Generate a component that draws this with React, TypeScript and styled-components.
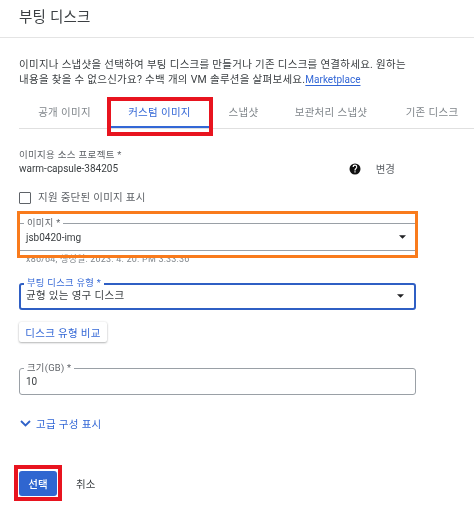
import React from "react";
import styled, { createGlobalStyle } from "styled-components";

const GlobalStyle = createGlobalStyle`
  html, body {
    margin: 0;
    padding: 0;
    background: #fff;
  }
  body {
    font-family: Roboto, "Noto Sans CJK KR", sans-serif;
    color: #3c4043;
  }
`;

const TABS = ["공개 이미지", "커스텀 이미지", "스냅샷", "보관처리 스냅샷", "기존 디스크"];

function ArrowDown() {
  return (
    <Arrow viewBox="0 0 10 5" aria-hidden="true">
      <path d="M0 0h10L5 5z" fill="#202124" />
    </Arrow>
  );
}

function HelpIcon() {
  return (
    <svg width="12" height="12" viewBox="0 0 24 24" aria-hidden="true">
      <path
        fill="#111"
        d="M12 1a11 11 0 1 0 0 22 11 11 0 0 0 0-22zm1.2 18h-2.4v-2.4h2.4V19zm2.5-8.3-1.1 1.1c-.9.9-1.4 1.6-1.4 3.2h-2.4v-.6c0-1.3.5-2.5 1.4-3.4l1.5-1.5c.4-.4.7-1 .7-1.6a2.4 2.4 0 0 0-4.8 0H7a4.8 4.8 0 0 1 9.6 0c0 1.1-.4 2-.9 2.8z"
      />
    </svg>
  );
}

export default function App() {
  return (
    <Page>
      <GlobalStyle />
      <Header>부팅 디스크</Header>
      <Body>
        <Description>
          이미지나 스냅샷을 선택하여 부팅 디스크를 만들거나 기존 디스크를 연결하세요. 원하는
          <br />
          내용을 찾을 수 없으신가요? 수백 개의 VM 솔루션을 살펴보세요.
          <MarketLink href="#">Marketplace</MarketLink>
        </Description>

        <TabBar>
          {TABS.map((tab, i) => (
            <Tab key={tab} $active={i === 1}>
              {tab}
              {i === 1 && <RedBox $inset="0 -4px -10px -3px" />}
            </Tab>
          ))}
        </TabBar>

        <SourceRow>
          <div>
            <SmallLabel>이미지용 소스 프로젝트 *</SmallLabel>
            <LatinValue>warm-capsule-384205</LatinValue>
          </div>
          <SourceActions>
            <HelpIcon />
            <ChangeText>변경</ChangeText>
          </SourceActions>
        </SourceRow>

        <CheckRow>
          <CheckBox />
          <span>지원 중단된 이미지 표시</span>
        </CheckRow>

        <ImageField>
          <FieldLegend>이미지 *</FieldLegend>
          <LatinValue>jsb0420-img</LatinValue>
          <ArrowDown />
        </ImageField>
        <HintWrap>
          <Hint>x86/64, 생성일: 2023. 4. 20. PM 3:33:36</Hint>
          <OrangeBox />
        </HintWrap>

        <DiskField>
          <FieldLegend $focused>부팅 디스크 유형 *</FieldLegend>
          <FieldValue>균형 있는 영구 디스크</FieldValue>
          <ArrowDown />
        </DiskField>

        <CompareButton>디스크 유형 비교</CompareButton>

        <SizeField>
          <FieldLegend>크기(GB) *</FieldLegend>
          <LatinValue>10</LatinValue>
        </SizeField>

        <AdvancedRow>
          <svg width="11" height="7" viewBox="0 0 11 7" aria-hidden="true">
            <path d="M1 1l4.5 4.5L10 1" fill="none" stroke="#2f62c9" strokeWidth="1.8" />
          </svg>
          고급 구성 표시
        </AdvancedRow>

        <Footer>
          <SelectButton>
            선택
            <RedBox $inset="-6px -5px -5px -5px" />
          </SelectButton>
          <CancelButton>취소</CancelButton>
        </Footer>
      </Body>
    </Page>
  );
}

const Page = styled.div`
  width: 474px;
  height: 509px;
  overflow: hidden;
  background: #fff;
  filter: blur(0.4px);
`;

const Header = styled.header`
  height: 38px;
  box-sizing: border-box;
  padding: 6px 0 0 19px;
  border-bottom: 1px solid #e4e4e4;
  font-size: 14.5px;
  line-height: 24px;
  letter-spacing: 0.2px;
  color: #3c4043;
`;

const Body = styled.main`
  padding: 19px 0 0 19px;
`;

const Description = styled.p`
  margin: 0;
  font-size: 10.5px;
  line-height: 15px;
  letter-spacing: 0.28px;
  color: #3c4043;
  white-space: nowrap;
`;

const MarketLink = styled.a`
  font-size: 10px;
  letter-spacing: 0;
  color: #3367d6;
  text-decoration: underline;
  text-underline-offset: 2px;
`;

const TabBar = styled.nav`
  display: flex;
  width: 455px;
  height: 32px;
  margin-top: 10px;
  box-sizing: border-box;
  border-bottom: 1px solid #e0e0e0;
`;

const Tab = styled.div<{ $active?: boolean }>`
  position: relative;
  box-sizing: border-box;
  height: 31px;
  padding-top: 8px;
  font-size: 10.5px;
  line-height: 16px;
  letter-spacing: 0.3px;
  color: ${(p) => (p.$active ? "#3367d6" : "#80868b")};
  text-align: center;
  white-space: nowrap;
  border-bottom: 2px solid ${(p) => (p.$active ? "#3367d6" : "transparent")};

  &:nth-child(1) { width: 91px; }
  &:nth-child(2) { width: 99px; }
  &:nth-child(3) { width: 61px; margin-left: 4px; }
  &:nth-child(4) { width: 100px; margin-left: 7px; }
  &:nth-child(5) { width: 60px; margin-left: 21px; }
`;

const RedBox = styled.span<{ $inset: string }>`
  position: absolute;
  inset: ${(p) => p.$inset};
  border: 4px solid #e8141f;
  pointer-events: none;
`;

const SourceRow = styled.section`
  display: flex;
  align-items: flex-end;
  justify-content: space-between;
  width: 376px;
  margin-top: 20px;
`;

const SmallLabel = styled.div`
  font-size: 9.5px;
  line-height: 12px;
  letter-spacing: 0.3px;
  color: #5f6368;
`;

const LatinValue = styled.div`
  font-size: 10px;
  line-height: 15px;
  color: #3c4043;
`;

const SourceActions = styled.div`
  display: flex;
  align-items: center;
  gap: 15px;
  height: 15px;
`;

const ChangeText = styled.span`
  font-size: 10.5px;
  color: #5f6368;
`;

const CheckRow = styled.label`
  display: flex;
  align-items: center;
  gap: 7px;
  margin-top: 15px;
  font-size: 10.5px;
  line-height: 14px;
  letter-spacing: 0.25px;
  color: #5f6368;
`;

const CheckBox = styled.span`
  display: block;
  box-sizing: border-box;
  width: 12px;
  height: 12px;
  border: 1px solid #5f6368;
  border-radius: 1px;
`;

const Field = styled.div`
  position: relative;
  box-sizing: border-box;
  width: 397px;
  padding: 0 0 0 7px;
`;

const FieldLegend = styled.span<{ $focused?: boolean }>`
  position: absolute;
  left: 5px;
  top: -7px;
  padding: 0 3px;
  background: #fff;
  font-size: 9.3px;
  line-height: 12px;
  letter-spacing: 0.3px;
  color: ${(p) => (p.$focused ? "#3367d6" : "#5f6368")};
`;

const FieldValue = styled.div`
  font-size: 10.5px;
  line-height: 15px;
  letter-spacing: 0.3px;
  color: #3c4043;
`;

const Arrow = styled.svg`
  position: absolute;
  right: 10px;
  top: 11px;
  width: 7px;
  height: 4px;
`;

const ImageField = styled(Field)`
  height: 28px;
  margin-top: 18px;
  border-top: 1px solid #9aa0a6;
  border-bottom: 1px solid #9aa0a6;
  padding-top: 6px;
`;

const HintWrap = styled.div`
  position: relative;
  width: 397px;
  padding-top: 3px;
`;

const OrangeBox = styled.span`
  position: absolute;
  left: -2px;
  right: -2px;
  top: -40px;
  bottom: 6px;
  border: 3.5px solid #f97b1c;
  pointer-events: none;
`;

const Hint = styled.div`
  margin-left: 7px;
  height: 10px;
  font-size: 9px;
  line-height: 10px;
  letter-spacing: 0.2px;
  color: #80868b;
`;

const DiskField = styled(Field)`
  height: 27px;
  margin-top: 19px;
  border: 2px solid #2f5fc4;
  border-radius: 3px;
  padding: 3px 0 0 5px;

  ${FieldLegend} {
    left: 3px;
    top: -8px;
  }

  ${Arrow} {
    top: 9px;
  }
`;

const CompareButton = styled.button`
  display: block;
  width: 88px;
  height: 20px;
  margin-top: 12px;
  padding: 0;
  border: 0;
  border-radius: 2px;
  background: #fff;
  box-shadow: 0 1px 2px rgba(60, 64, 67, 0.35), 0 0 2px rgba(60, 64, 67, 0.15);
  font: inherit;
  font-size: 10.5px;
  letter-spacing: 0.3px;
  color: #3367d6;
`;

const SizeField = styled(Field)`
  height: 27px;
  margin-top: 26px;
  border: 1px solid #9aa0a6;
  border-radius: 3px;
  padding: 5px 0 0 6px;

  ${FieldLegend} {
    left: 4px;
  }
`;

const AdvancedRow = styled.div`
  display: flex;
  align-items: center;
  gap: 5px;
  margin: 20px 0 0 1px;
  height: 16px;
  font-size: 10.5px;
  letter-spacing: 0.3px;
  color: #3367d6;
`;

const Footer = styled.footer`
  display: flex;
  align-items: center;
  margin-top: 40px;
`;

const SelectButton = styled.button`
  position: relative;
  width: 38px;
  height: 25px;
  padding: 0;
  border: 0;
  border-radius: 3px;
  background: #2f66d0;
  font: inherit;
  font-size: 10.5px;
  font-weight: 500;
  color: #fff;
`;

const CancelButton = styled.button`
  margin-left: 19px;
  padding: 0;
  border: 0;
  background: none;
  font: inherit;
  font-size: 10.5px;
  color: #3c4043;
`;
